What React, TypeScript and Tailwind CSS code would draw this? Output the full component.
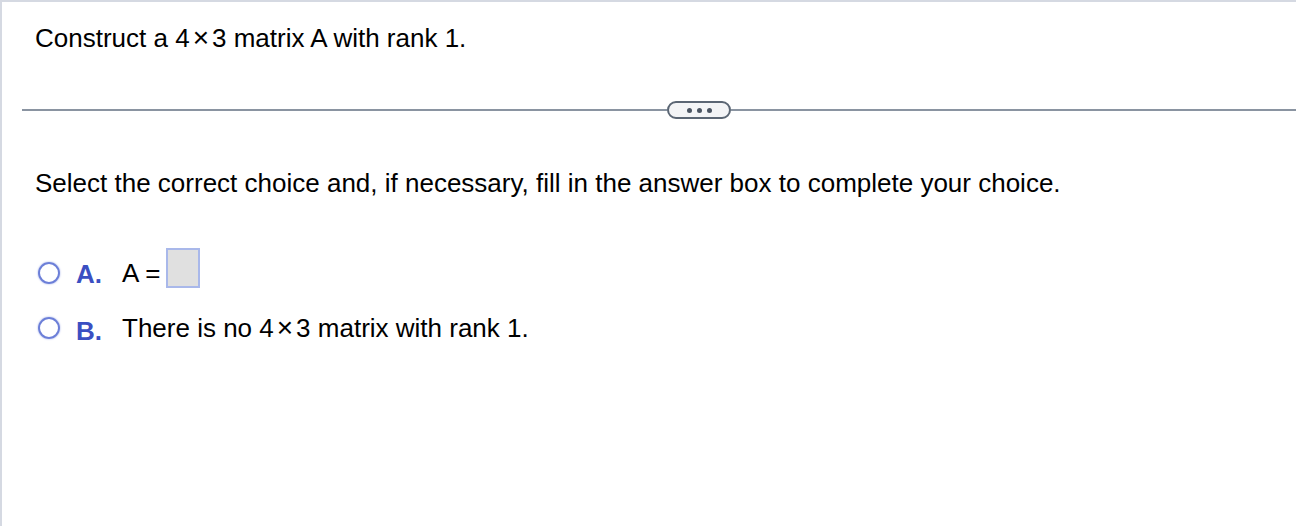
export default function App() {
  const Times = () => (
    <span className="inline-block align-top mx-[3px] text-[28px] leading-[29px] h-[30px]">×</span>
  );
  return (
    <div
      className="w-full h-[526px] bg-white border-l-2 border-t-2 border-[#d5d9e2] text-black overflow-hidden"
      style={{ fontFamily: '"Liberation Sans", Arial, sans-serif' }}
    >
      <div className="pt-[21px] pl-[33px] text-[26px] leading-[30px]">
        Construct a 4<Times />3 matrix A with rank 1.
      </div>
      <div className="mt-[48px] ml-[20px] flex items-center h-[18px]">
        <div className="w-[645px] h-[2px] bg-[#8a94a1]" />
        <div className="w-[64px] h-[18px] rounded-full border-2 border-[#5b6674] bg-[#f3f4f6] flex items-center justify-center gap-[5px]">
          <span className="w-[5px] h-[5px] rounded-full bg-[#4b5563]" />
          <span className="w-[5px] h-[5px] rounded-full bg-[#4b5563]" />
          <span className="w-[5px] h-[5px] rounded-full bg-[#4b5563]" />
        </div>
        <div className="flex-1 h-[2px] bg-[#8a94a1]" />
      </div>
      <div className="mt-[49px] pl-[33px] text-[26px] leading-[30px]">
        Select the correct choice and, if necessary, fill in the answer box to complete your choice.
      </div>
      <div className="mt-[55px] pl-[36px] flex flex-col gap-[20px]">
        <div className="flex items-center h-[40px]">
          <span className="w-[22px] h-[22px] rounded-full border-[2.5px] border-[#6c7fd8] shadow-[0_0_2px_#9aa8e6]" />
          <span className="ml-[16px] w-[46px] text-[26px] font-bold text-[#3b4fc2] leading-[30px] translate-y-[1px]">A.</span>
          <span className="text-[26px] leading-[30px]">A =</span>
          <span className="ml-[6px] w-[34px] h-[40px] border-2 border-[#a9b8ea] bg-[#e0e0e0] -translate-y-[5px]" />
        </div>
        <div className="flex items-center h-[30px]">
          <span className="w-[22px] h-[22px] rounded-full border-[2.5px] border-[#6c7fd8] shadow-[0_0_2px_#9aa8e6]" />
          <span className="ml-[16px] w-[46px] text-[26px] font-bold text-[#3b4fc2] leading-[30px] translate-y-[3px]">B.</span>
          <span className="text-[26px] leading-[30px]">
            There is no 4<Times />3 matrix with rank 1.
          </span>
        </div>
      </div>
    </div>
  );
}
